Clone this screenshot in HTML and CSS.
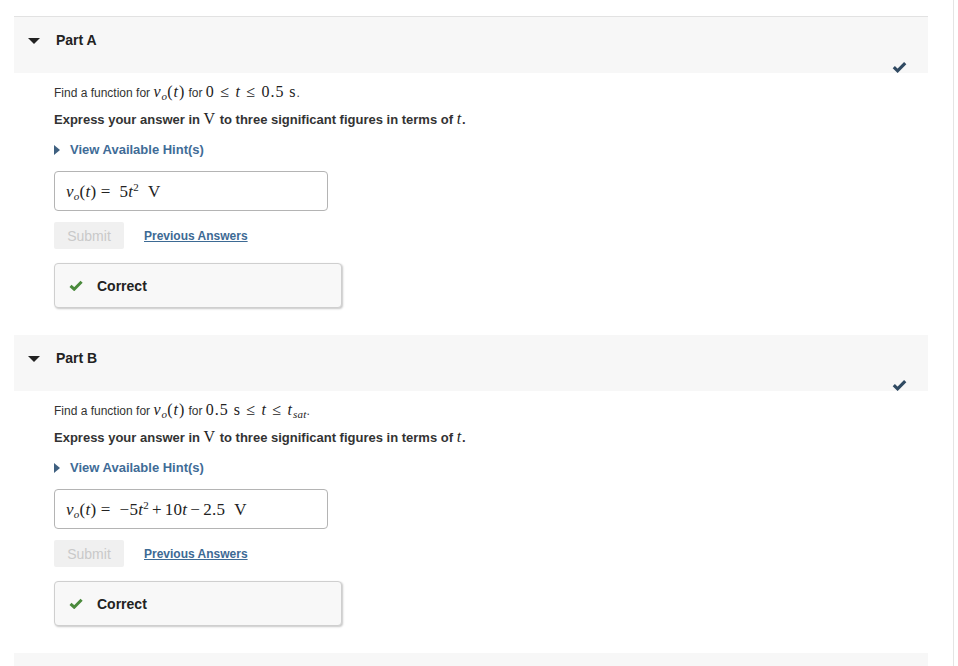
FILE: index.html
```html
<!DOCTYPE html>
<html>
<head>
<meta charset="utf-8">
<link rel="stylesheet" href="styles.css">
</head>
<body>
<div class="page">
  <div class="parts">
    <section class="part first">
      <div class="part-head">
        <span class="caret-down"></span>
        <span class="part-title">Part A</span>
        <svg class="done" width="15" height="12" viewBox="0 0 15 12"><path d="M1.8 6.2 L5.6 9.8 L13.2 2.2" fill="none" stroke="#304a62" stroke-width="3.2" stroke-linejoin="miter"/></svg>
      </div>
      <div class="part-body">
        <p class="q">Find a function for <span class="m"><i>v</i><sub><i>o</i></sub>(<i>t</i>)</span> for <span class="m">0<span class="rel">≤</span><i>t</i><span class="rel">≤</span>0.5 s</span>.</p>
        <p class="instr">Express your answer in <span class="m">V</span> to three significant figures in terms of <span class="m"><i>t</i></span>.</p>
        <div class="hint"><span class="caret-right"></span>View Available Hint(s)</div>
        <div class="answer"><span class="m big"><i>v</i><sub><i>o</i></sub>(<i>t</i>)<span class="rel">=</span>&nbsp;5<i>t</i><sup>2</sup>&nbsp;&nbsp;V</span></div>
        <div class="actions">
          <button class="submit">Submit</button>
          <a class="prev">Previous Answers</a>
        </div>
        <div class="correct">
          <svg width="14" height="11" viewBox="0 0 14 11"><path d="M1.5 5.8 L5.2 9.2 L12.6 1.8" fill="none" stroke="#4a8a3c" stroke-width="3"/></svg>
          <span>Correct</span>
        </div>
      </div>
    </section>
    <section class="part">
      <div class="part-head">
        <span class="caret-down"></span>
        <span class="part-title">Part B</span>
        <svg class="done" width="15" height="12" viewBox="0 0 15 12"><path d="M1.8 6.2 L5.6 9.8 L13.2 2.2" fill="none" stroke="#304a62" stroke-width="3.2" stroke-linejoin="miter"/></svg>
      </div>
      <div class="part-body">
        <p class="q">Find a function for <span class="m"><i>v</i><sub><i>o</i></sub>(<i>t</i>)</span> for <span class="m">0.5 s<span class="rel">≤</span><i>t</i><span class="rel">≤</span><i>t</i><sub><i>sat</i></sub></span>.</p>
        <p class="instr">Express your answer in <span class="m">V</span> to three significant figures in terms of <span class="m"><i>t</i></span>.</p>
        <div class="hint"><span class="caret-right"></span>View Available Hint(s)</div>
        <div class="answer"><span class="m big"><i>v</i><sub><i>o</i></sub>(<i>t</i>)<span class="rel">=</span>&nbsp;−5<i>t</i><sup>2</sup><span class="bin">+</span>10<i>t</i><span class="bin">−</span>2.5&nbsp;&nbsp;V</span></div>
        <div class="actions">
          <button class="submit">Submit</button>
          <a class="prev">Previous Answers</a>
        </div>
        <div class="correct">
          <svg width="14" height="11" viewBox="0 0 14 11"><path d="M1.5 5.8 L5.2 9.2 L12.6 1.8" fill="none" stroke="#4a8a3c" stroke-width="3"/></svg>
          <span>Correct</span>
        </div>
      </div>
    </section>
    <section class="part">
      <div class="part-head stub"></div>
    </section>
  </div>
</div>
</body>
</html>
```

FILE: styles.css
```css
html, body {
  margin: 0;
  padding: 0;
  background: #fff;
}
body {
  font-family: "Liberation Sans", Arial, sans-serif;
  color: #333;
  font-size: 12px;
}
.page {
  width: 954px;
  min-height: 666px;
  border-right: 1px solid #e4e4e4;
  box-sizing: border-box;
  padding-top: 16px;
}
.parts {
  margin-left: 14px;
  width: 914px;
}
.part.first {
  border-top: 1px solid #e2e2e2;
}
.part-head {
  height: 56px;
  background: #f7f7f7;
  display: flex;
  align-items: flex-start;
  padding: 14px 21px 0 14px;
  box-sizing: border-box;
}
.part-head.stub {
  height: 14px;
  padding: 0;
}
.caret-down {
  width: 0;
  height: 0;
  border-left: 6px solid transparent;
  border-right: 6px solid transparent;
  border-top: 6px solid #222;
  margin-top: 7px;
  margin-right: 16px;
}
.part-title {
  font-size: 14px;
  font-weight: bold;
  color: #222;
  line-height: 18px;
}
.done {
  margin-left: auto;
  align-self: flex-end;
  margin-bottom: 0px;
}
.part-body {
  padding: 11px 0 27px 40px;
}
p {
  margin: 0;
}
.q, .instr {
  height: 18px;
  line-height: 18px;
  white-space: nowrap;
}
.instr {
  margin-top: 9px;
  font-size: 13px;
  font-weight: bold;
  color: #333;
}
.m {
  font-family: "Liberation Serif", "Times New Roman", serif;
  font-size: 16px;
  font-weight: normal;
  color: #222;
  line-height: 1;
  letter-spacing: 0.06em;
}
.rel {
  padding: 0 0.34em;
}
.bin {
  padding: 0 0.22em;
}
.m sub, .m sup {
  font-size: 11px;
  line-height: 0;
  letter-spacing: 0.02em;
}
.m sub {
  vertical-align: -3px;
}
.m sup {
  vertical-align: 6px;
}
.hint {
  margin-top: 12px;
  height: 18px;
  line-height: 18px;
  font-size: 13px;
  font-weight: bold;
  color: #3f6c97;
  display: flex;
  align-items: center;
}
.caret-right {
  width: 0;
  height: 0;
  border-top: 5px solid transparent;
  border-bottom: 5px solid transparent;
  border-left: 6px solid #3f6080;
  margin-right: 10px;
}
.answer {
  margin-top: 12px;
  width: 274px;
  height: 40px;
  box-sizing: border-box;
  border: 1px solid #b4b4b4;
  border-radius: 4px;
  display: flex;
  align-items: center;
  padding-left: 11px;
}
.m.big {
  font-size: 17px;
  letter-spacing: 0.015em;
}
.m.big .rel {
  padding: 0 0.26em;
}
.m.big .bin {
  padding: 0 0.18em;
}
.actions {
  margin-top: 11px;
  display: flex;
  align-items: center;
  gap: 20px;
}
.submit {
  width: 70px;
  height: 27px;
  border: none;
  border-radius: 2px;
  background: #f0f0f0;
  color: #c9c9c9;
  font-family: "Liberation Sans", Arial, sans-serif;
  font-size: 14px;
  padding: 0;
}
.prev {
  font-weight: bold;
  color: #3d6a94;
  text-decoration: underline;
  font-size: 12px;
}
.correct {
  margin-top: 14px;
  width: 288px;
  height: 45px;
  box-sizing: border-box;
  background: #f8f8f8;
  border: 1px solid #cfcfcf;
  border-radius: 4px;
  box-shadow: 1px 1px 2px rgba(0,0,0,0.22);
  display: flex;
  align-items: center;
  padding-left: 14px;
  gap: 14px;
}
.correct span {
  font-size: 14px;
  font-weight: bold;
  color: #222;
}
```
